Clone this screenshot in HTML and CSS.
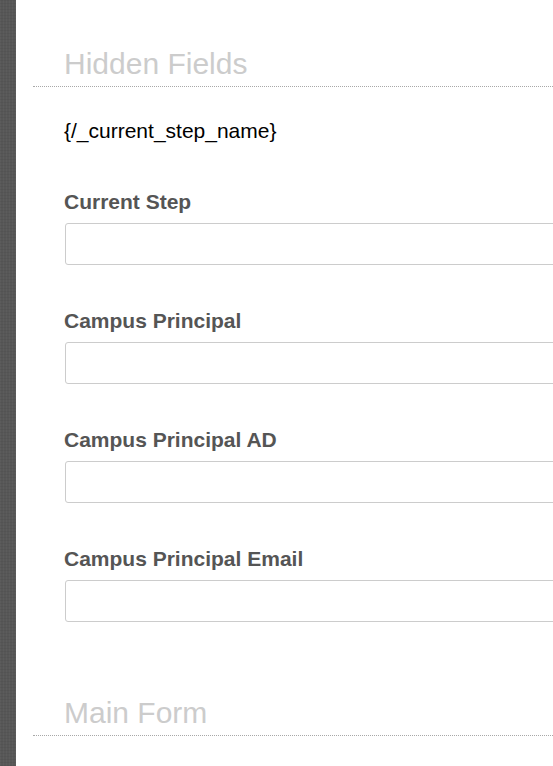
FILE: index.html
```html
<!DOCTYPE html>
<html>
<head>
<meta charset="utf-8">
<link rel="stylesheet" href="styles.css">
</head>
<body>
<div class="rail"></div>
<main class="main">
  <h2 class="section-title first">Hidden Fields</h2>
  <div class="merge-tag">{/_current_step_name}</div>
  <div class="field">
    <label class="field-label">Current Step</label>
    <input class="field-input" type="text">
  </div>
  <div class="field">
    <label class="field-label">Campus Principal</label>
    <input class="field-input" type="text">
  </div>
  <div class="field">
    <label class="field-label">Campus Principal AD</label>
    <input class="field-input" type="text">
  </div>
  <div class="field">
    <label class="field-label">Campus Principal Email</label>
    <input class="field-input" type="text">
  </div>
  <h2 class="section-title second">Main Form</h2>
</main>
</body>
</html>
```
FILE: styles.css
```css
html, body {
  margin: 0;
  padding: 0;
  height: 100%;
  overflow: hidden;
  background: #fff;
}
body {
  display: flex;
  font-family: "Liberation Sans", Arial, sans-serif;
}
.rail {
  flex: 0 0 16px;
  width: 16px;
  background-color: #575757;
  background-image:
    repeating-linear-gradient(0deg, rgba(0,0,0,0.05) 0 1px, transparent 1px 3px),
    repeating-linear-gradient(90deg, rgba(255,255,255,0.03) 0 1px, transparent 1px 3px);
}
.main {
  flex: 1;
  min-width: 0;
  padding-left: 17px;
  overflow: hidden;
}
.section-title {
  margin: 0;
  padding: 0 0 4px 31px;
  font-weight: normal;
  font-size: 30px;
  line-height: 36px;
  color: #cccccc;
  border-bottom: 1px dotted #a8a8a8;
}
.section-title.first {
  margin-top: 46px;
}
.section-title.second {
  margin-top: 73px;
}
.merge-tag {
  margin-top: 32px;
  padding-left: 31px;
  font-size: 21px;
  line-height: 24px;
  color: #000;
}
.field {
  margin-top: 47px;
  padding-left: 31px;
}
.field + .field {
  margin-top: 44px;
}
.field-label {
  display: block;
  font-weight: bold;
  font-size: 21px;
  line-height: 24px;
  color: #555555;
}
.field-input {
  display: block;
  box-sizing: border-box;
  margin: 9px 0 0 1px;
  width: 560px;
  height: 42px;
  border: 1px solid #cccccc;
  border-radius: 3px;
  background: #fff;
  padding: 0 10px;
  font-size: 16px;
}
```
